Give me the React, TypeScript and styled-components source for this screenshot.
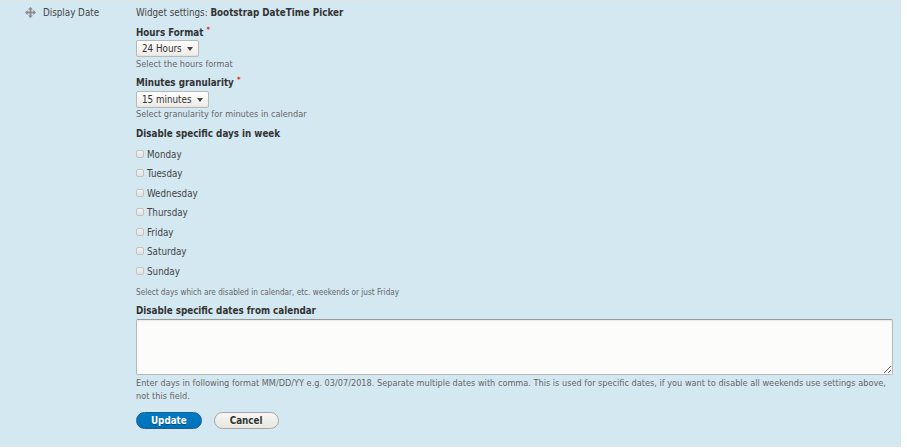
import React from 'react'
import { styled, createGlobalStyle } from 'styled-components'

const GlobalStyle = createGlobalStyle`
  html, body {
    margin: 0;
    padding: 0;
    background: #ffffff;
  }
  body {
    font-family: "DejaVu Sans Condensed", "DejaVu Sans", sans-serif;
    font-stretch: semi-condensed;
    font-size: 9.75px;
    line-height: 15px;
    color: #333333;
  }
`

const days = ['Monday', 'Tuesday', 'Wednesday', 'Thursday', 'Friday', 'Saturday', 'Sunday']

const DragHandle = () => (
  <svg width="11" height="11" viewBox="0 0 11 11" fill="#8a8a8a">
    <rect x="4.6" y="2" width="1.8" height="7" />
    <rect x="2" y="4.6" width="7" height="1.8" />
    <polygon points="5.5,0 8,2.6 3,2.6" />
    <polygon points="5.5,11 8,8.4 3,8.4" />
    <polygon points="0,5.5 2.6,3 2.6,8" />
    <polygon points="11,5.5 8.4,3 8.4,8" />
  </svg>
)

const App = () => {
  return (
    <>
      <GlobalStyle />
      <Page>
        <FieldRow>
          <HandleCell>
            <DragHandle />
          </HandleCell>
          <NameCell>Display Date</NameCell>
          <SettingsCell>
            <WidgetTitle>
              Widget settings: <strong>Bootstrap DateTime Picker</strong>
            </WidgetTitle>

            <FormItem>
              <Label>
                Hours Format <Required>*</Required>
              </Label>
              <SelectWrap $width={63}>
                <Select defaultValue="24">
                  <option value="24">24 Hours</option>
                  <option value="12">12 Hours</option>
                </Select>
              </SelectWrap>
              <Description $gap={0.5}>Select the hours format</Description>
            </FormItem>

            <FormItem $gap={4.5}>
              <Label>
                Minutes granularity <Required>*</Required>
              </Label>
              <SelectWrap $width={73}>
                <Select defaultValue="15">
                  <option value="5">5 minutes</option>
                  <option value="15">15 minutes</option>
                  <option value="30">30 minutes</option>
                </Select>
              </SelectWrap>
              <Description>Select granularity for minutes in calendar</Description>
            </FormItem>

            <FormItem>
              <Label>Disable specific days in week</Label>
              <CheckList>
                {days.map((day) => (
                  <CheckRow key={day}>
                    <Checkbox type="checkbox" />
                    <span>{day}</span>
                  </CheckRow>
                ))}
              </CheckList>
              <SmallDescription>Select days which are disabled in calendar, etc. weekends or just Friday</SmallDescription>
            </FormItem>

            <FormItem>
              <Label>Disable specific dates from calendar</Label>
              <TextArea />
              <Description $gap={2}>
                Enter days in following format MM/DD/YY e.g. 03/07/2018. Separate multiple dates with comma. This is
                used for specific dates, if you want to disable all weekends use settings above, not this field.
              </Description>
            </FormItem>

            <Actions>
              <Button $primary>Update</Button>
              <Button>Cancel</Button>
            </Actions>
          </SettingsCell>
        </FieldRow>
        <BottomRule />
      </Page>
    </>
  )
}

const Page = styled.div`
  width: 901px;
`

const FieldRow = styled.div`
  display: grid;
  grid-template-columns: 43px 93px 1fr;
  background-color: #d4e8f2;
  border-top: 1px solid #e3e4e0;
  padding: 3.5px 8px 17px 0;
`

const HandleCell = styled.div`
  display: flex;
  align-items: center;
  height: 15px;
  padding-left: 25px;
`

const NameCell = styled.div`
  height: 15px;
  color: #444444;
`

const SettingsCell = styled.div`
  display: flex;
  flex-direction: column;
  min-width: 0;
`

const WidgetTitle = styled.div`
  color: #444444;

  strong {
    color: #333333;
    font-weight: 700;
  }
`

const FormItem = styled.div<{ $gap?: number }>`
  display: flex;
  flex-direction: column;
  align-items: flex-start;
  margin-top: ${(p) => p.$gap ?? 5}px;
`

const Label = styled.label`
  font-weight: 700;
  color: #333333;
`

const Required = styled.span`
  color: #e32700;
  font-size: 7.5px;
  vertical-align: top;
  line-height: 10px;
`

const SelectWrap = styled.div<{ $width: number }>`
  position: relative;
  width: ${(p) => p.$width}px;
  margin-top: 0.5px;

  &::after {
    content: '';
    position: absolute;
    right: 6px;
    top: 7px;
    border-left: 3px solid transparent;
    border-right: 3px solid transparent;
    border-top: 4px solid #444444;
    pointer-events: none;
  }
`

const Select = styled.select`
  appearance: none;
  width: 100%;
  height: 17px;
  margin: 0;
  padding: 0 14px 0 5px;
  font-family: inherit;
  font-stretch: inherit;
  font-size: 9.75px;
  line-height: 15px;
  color: #333333;
  border: 1px solid #b8b8b8;
  border-radius: 2px;
  background: linear-gradient(#fefefd, #ecebe6);
  box-shadow: inset 0 -1px 0 rgba(0, 0, 0, 0.03);
`

const Description = styled.div<{ $gap?: number }>`
  font-size: 9.1px;
  line-height: 13px;
  color: #666666;
  margin-top: ${(p) => p.$gap ?? 0}px;
`

const SmallDescription = styled.div`
  font-size: 8.15px;
  line-height: 11px;
  color: #666666;
  margin-top: 6px;
`

const CheckList = styled.div`
  display: flex;
  flex-direction: column;
  margin-top: 3.75px;
`

const CheckRow = styled.label`
  display: flex;
  align-items: center;
  gap: 3px;
  height: 19.5px;
  color: #444444;
`

const Checkbox = styled.input`
  appearance: none;
  width: 8px;
  height: 8px;
  margin: 0 0 1px 0;
  border: 1px solid #c2c2c2;
  border-radius: 2px;
  background: linear-gradient(#f2f2f2, #e2e2e2);
`

const TextArea = styled.textarea`
  box-sizing: border-box;
  width: 100%;
  height: 56px;
  margin: 1.5px 0 0;
  padding: 4px;
  border: 1px solid #b8b8b8;
  border-top-color: #999999;
  border-radius: 2px;
  background: #fcfcfa;
  box-shadow: inset 0 1px 2px rgba(0, 0, 0, 0.08);
  font-family: inherit;
  font-size: 9.75px;
`

const Actions = styled.div`
  display: flex;
  gap: 12px;
  margin-top: 8.5px;
`

const Button = styled.button<{ $primary?: boolean }>`
  height: 17.5px;
  padding: 0 ${(p) => (p.$primary ? '14px' : '15px')};
  border-radius: 20em;
  font-family: inherit;
  font-stretch: inherit;
  font-size: 9.75px;
  font-weight: 700;
  line-height: 15px;
  cursor: pointer;
  color: ${(p) => (p.$primary ? '#ffffff' : '#333333')};
  border: 1px solid ${(p) => (p.$primary ? '#1e5c90' : '#a6a6a6')};
  background: ${(p) =>
    p.$primary ? 'linear-gradient(#007bc6, #0071b8)' : 'linear-gradient(#f6f6f3, #e7e7df)'};
  text-shadow: ${(p) => (p.$primary ? '0 1px rgba(0,0,0,0.3)' : '0 1px rgba(255,255,255,0.6)')};
`

const BottomRule = styled.div`
  height: 1px;
  background: #e3e4e0;
`

export default App
